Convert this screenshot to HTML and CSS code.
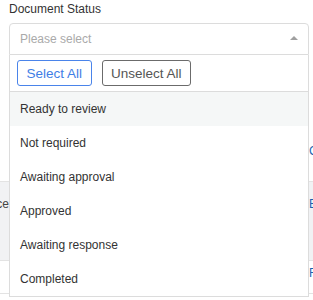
FILE: index.html
```html
<!DOCTYPE html>
<html lang="en">
<head>
    <meta charset="UTF-8">
    <meta name="viewport" content="width=device-width, initial-scale=1.0">
    <title>Document Status</title>
    <link rel="stylesheet" href="styles.css">
</head>
<body>

    <div class="field">
        <label class="field-label">Document Status</label>
        <div class="select">
            <div class="select-input">
                <span class="placeholder">Please select</span>
                <span class="caret"></span>
            </div>
            <div class="select-panel">
                <div class="select-actions">
                    <button class="btn btn-primary">Select All</button>
                    <button class="btn">Unselect All</button>
                </div>
                <ul class="options">
                    <li class="option active">Ready to review</li>
                    <li class="option">Not required</li>
                    <li class="option">Awaiting approval</li>
                    <li class="option">Approved</li>
                    <li class="option">Awaiting response</li>
                    <li class="option">Completed</li>
                </ul>
            </div>
        </div>
    </div>

    <!-- table behind the dropdown -->
    <div class="table">
        <div class="row row-first">
            <div class="cell cell-left"></div>
            <div class="cell"></div>
            <div class="cell cell-link">Contract</div>
        </div>
        <div class="row row-alt">
            <div class="cell cell-left"><span>Reference</span></div>
            <div class="cell"></div>
            <div class="cell cell-link">Engineering</div>
        </div>
        <div class="row row-last">
            <div class="cell cell-left"></div>
            <div class="cell"></div>
            <div class="cell cell-link">Finance</div>
        </div>
    </div>

</body>
</html>
```

FILE: styles.css
```css
body {
    margin: 0;
    font-family: 'Liberation Sans', Arial, sans-serif;
    font-size: 12px;
    color: #333;
    background: #fff;
    width: 313px;
    height: 300px;
    overflow: hidden;
}

.field {
    padding: 1px 0 0 9px;
}

.field-label {
    display: block;
    line-height: 16px;
    margin-bottom: 6px;
    color: #333;
}

/* Select box */
.select {
    position: relative;
    width: 300px;
    z-index: 5;
}

.select-input {
    display: flex;
    align-items: center;
    justify-content: space-between;
    height: 32px;
    box-sizing: border-box;
    padding: 0 10px;
    border: 1px solid #dcdcdc;
    border-radius: 4px 4px 0 0;
    background: #fff;
}

.placeholder {
    color: #aaa;
}

.caret {
    width: 0;
    height: 0;
    border-left: 4.5px solid transparent;
    border-right: 4.5px solid transparent;
    border-bottom: 4px solid #a0a0a0;
    margin-top: -2px;
}

.select-panel {
    position: absolute;
    top: 100%;
    left: 0;
    right: 0;
    background: #fff;
    border: 1px solid #dcdcdc;
    border-top: none;
}

.select-actions {
    display: flex;
    gap: 10px;
    padding: 5px 7px 5px;
    border-bottom: 1px solid #dcdcdc;
}

.btn {
    height: 26px;
    padding: 0 8.5px;
    font-family: 'Liberation Sans', Arial, sans-serif;
    font-size: 13.5px;
    color: #555;
    background: #fff;
    border: 1px solid #6b6b6b;
    border-radius: 3px;
}

.btn-primary {
    color: #3f7ee6;
    border-color: #4a84ea;
}

.options {
    list-style: none;
    margin: 0;
    padding: 0;
}

.option {
    height: 34px;
    line-height: 34px;
    padding-left: 10px;
    color: #333;
}

.option.active {
    background: #f5f7f7;
}

/* Background table */
.table {
    width: 313px;
}

.row {
    display: grid;
    grid-template-columns: 9px 1fr 4px;
    border-bottom: 1px solid #e3e3e3;
    line-height: 16px;
}

.cell {
    white-space: nowrap;
}

.cell-left {
    display: flex;
    justify-content: flex-end;
    overflow: hidden;
    color: #444;
}

.cell-link {
    color: #1b64b0;
}

.row-first {
    height: 127px;
    padding-top: 88px;
    box-sizing: border-box;
}

.row-alt {
    height: 79px;
    padding-top: 14px;
    box-sizing: border-box;
    background: #f1f2f4;
}

.row-last {
    height: 33px;
    padding-top: 4px;
    box-sizing: border-box;
}
```
